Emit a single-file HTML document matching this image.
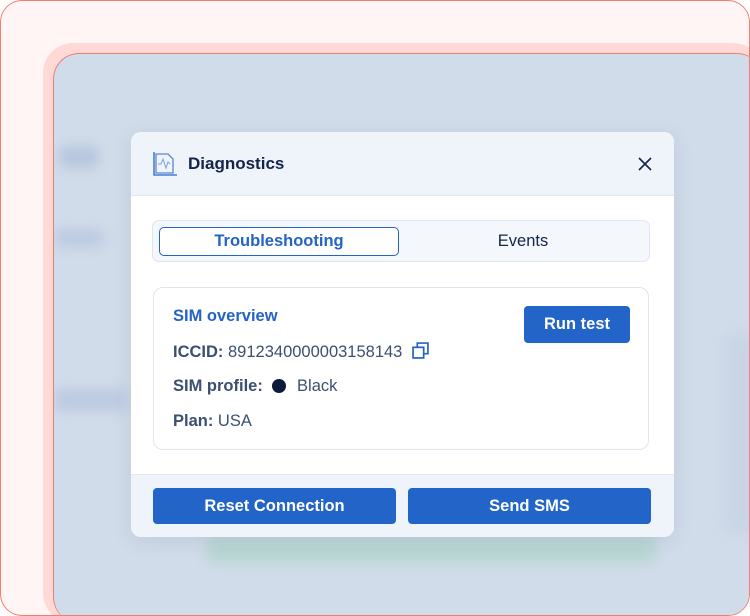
<!DOCTYPE html>
<html><head><meta charset="utf-8"><style>
*{box-sizing:border-box;margin:0;padding:0}
html,body{width:750px;height:616px;overflow:hidden}
body{font-family:"Liberation Sans",sans-serif;background:#fff;position:relative}
.outer{position:absolute;left:0;top:0;width:750px;height:616px;background:#fff5f4;border:1.5px solid #f47c72;border-radius:22px;overflow:hidden}
.frame{position:absolute;left:42px;top:42px;width:720px;height:580px;background:#ffd9d5;border-radius:30px}
.inner{position:absolute;left:52px;top:52px;width:710px;height:570px;background:#d1dcea;border-top:1.5px solid #f47c72;border-left:1.5px solid #f47c72;border-radius:26px;overflow:hidden}
.blob{position:absolute;filter:blur(6px);border-radius:8px}
.modal{position:absolute;left:130px;top:131px;width:543px;height:405px;background:#fff;border-radius:10px;overflow:hidden;box-shadow:0 4px 20px rgba(60,80,120,.12)}
.hdr{height:64px;background:#eff4fb;border-bottom:1.5px solid #dfe7f3;position:relative}
.hdr .t{position:absolute;left:57px;top:22px;font-size:17px;font-weight:bold;color:#14234a}
.tabs{position:absolute;left:21px;top:88px;width:498px;height:42px;border:1px solid #dfe6f1;border-radius:7px;background:#f4f7fb}
.tab1{position:absolute;left:6px;top:6px;width:240px;height:29px;border:1.5px solid #2563c6;border-radius:5px;background:#fff;color:#2563c6;font-weight:bold;font-size:16.5px;text-align:center;line-height:27px}
.tab2{position:absolute;left:250px;top:6px;width:240px;height:29px;color:#14234a;font-size:16.5px;text-align:center;line-height:29px}
.card{position:absolute;left:22px;top:155px;width:496px;height:163px;border:1px solid #dde5f1;border-radius:10px}
.card .l{position:absolute;left:19px;font-size:16.5px;color:#3b4f72}
.card b{color:#3b4f72}
.btn{position:absolute;background:#2264c8;color:#fff;font-size:16.5px;font-weight:bold;text-align:center;border-radius:4px}
.foot{position:absolute;left:0;top:342px;width:543px;height:63px;background:#eff4fb;border-top:1.5px solid #e2e9f4}
</style></head><body>
<div class="outer">
<div class="frame"></div>
<div class="inner">
<div class="blob" style="left:5px;top:92px;width:40px;height:22px;background:#b7c6de"></div>
<div class="blob" style="left:0px;top:175px;width:50px;height:18px;background:#bccae0"></div>
<div class="blob" style="left:0px;top:335px;width:75px;height:22px;background:#bccae0"></div>
<div class="blob" style="left:152px;top:480px;width:450px;height:30px;background:#b9d6d3"></div>
<div class="blob" style="left:670px;top:280px;width:40px;height:200px;background:#c9d5e5"></div>
</div>
<div class="modal">
<div class="hdr">
<svg style="position:absolute;left:22px;top:19px" width="26" height="26" viewBox="0 0 26 26" fill="none" stroke="#2563c6" stroke-width="1.3"><path d="M1 1v23h23"/><path d="M3 3h12l5 5v14H3z" stroke="#5a86d4"/><path d="M5 13h3l2-5 3 9 2-6 2 2" stroke="#7aa0dc" stroke-width="1"/></svg>
<div class="t">Diagnostics</div>
<svg style="position:absolute;left:507px;top:25px" width="14" height="14" viewBox="0 0 14 14" stroke="#14234a" stroke-width="1.6"><path d="M1 1l12 12M13 1L1 13"/></svg>
</div>
<div class="tabs"><div class="tab1">Troubleshooting</div><div class="tab2">Events</div></div>
<div class="card">
<div class="l" style="top:19px;color:#2563c6;font-weight:bold">SIM overview</div>
<div class="l" style="top:54px"><b>ICCID:</b> 8912340000003158143
<svg style="vertical-align:-2px;margin-left:5px" width="17" height="17" viewBox="0 0 16 16" fill="none" stroke="#2563c6" stroke-width="1.6"><rect x="1" y="5" width="10" height="10"/><path d="M5 5V1h10v10h-4"/></svg></div>
<div class="l" style="top:89px"><b>SIM profile:</b> <span style="display:inline-block;width:14px;height:14px;border-radius:50%;background:#0e1a3a;vertical-align:-2px;margin:0 6px 0 5px"></span> Black</div>
<div class="l" style="top:124px"><b>Plan:</b> USA</div>
<div class="btn" style="left:370px;top:18px;width:106px;height:37px;line-height:37px">Run test</div>
</div>
<div class="foot">
<div class="btn" style="left:22px;top:13px;width:243px;height:36px;line-height:36px">Reset Connection</div>
<div class="btn" style="left:277px;top:13px;width:243px;height:36px;line-height:36px">Send SMS</div>
</div>
</div>
</div>
</body></html>
